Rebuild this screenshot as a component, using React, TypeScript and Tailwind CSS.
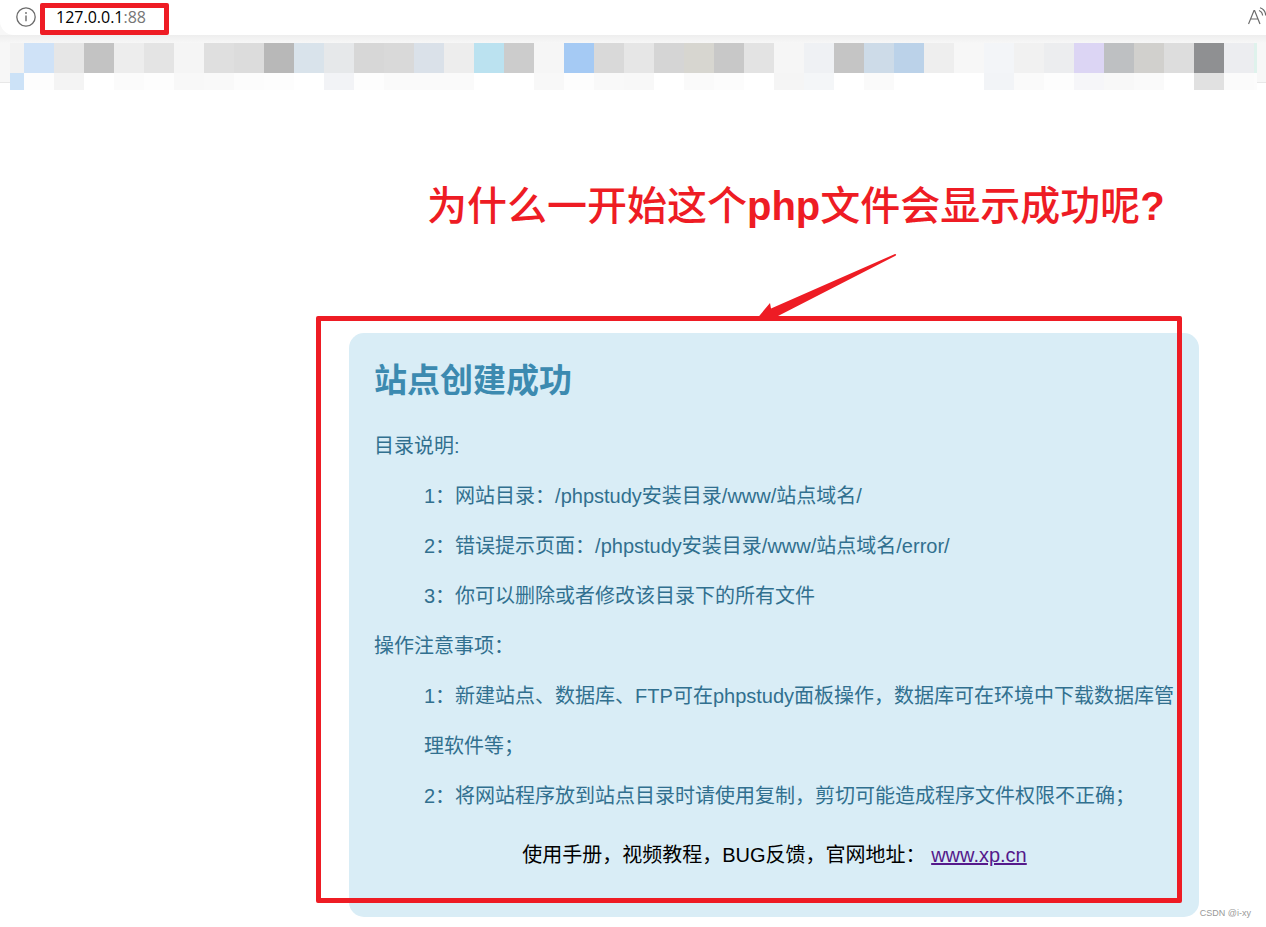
import { clsx } from "clsx";

const topCells = [
  "bg-[#cfe2f7]", "bg-[#e6e6e6]", "bg-[#c3c3c3]", "bg-[#ededed]", "bg-[#e4e4e4]", "bg-[#f5f5f5]",
  "bg-[#dfdfdf]", "bg-[#dcdcdc]", "bg-[#b8b8b8]", "bg-[#d9e3eb]", "bg-[#e6e8ea]", "bg-[#d7d7d7]",
  "bg-[#d9d9d9]", "bg-[#dae1e9]", "bg-[#ededed]", "bg-[#bbe2f0]", "bg-[#cccccc]", "bg-[#f6f6f6]",
  "bg-[#a5caf4]", "bg-[#d9d9d9]", "bg-[#e6e6e6]", "bg-[#d5d5d5]", "bg-[#d7d6d0]", "bg-[#c8c8c8]",
  "bg-[#e3e3e3]", "bg-[#f6f6f6]", "bg-[#eff1f4]", "bg-[#c5c5c5]", "bg-[#cddbe8]", "bg-[#bbd2e9]",
  "bg-[#eeeeee]", "bg-[#f7f7f7]", "bg-[#f3f5f8]", "bg-[#f1f1f1]", "bg-[#ecedef]", "bg-[#dcd5f4]",
  "bg-[#bec0c2]", "bg-[#d1d0cd]", "bg-[#dddddd]", "bg-[#8f9092]", "bg-[#ecedf0]",
];

const bottomCells = [
  "bg-[#fdfdfd]", "bg-[#f4f4f4]", "bg-white", "bg-[#fbfbfb]", "bg-[#fdfdfd]", "bg-[#f8f8f8]",
  "bg-[#f9f9f9]", "bg-[#fcfcfc]", "bg-[#fdfdfd]", "bg-white", "bg-[#f2f3f6]", "bg-[#fdfdfd]",
  "bg-[#fafafa]", "bg-[#fafafa]", "bg-[#fafafa]", "bg-white", "bg-white", "bg-[#f8f8f8]",
  "bg-[#fdfdfd]", "bg-[#f9f9f9]", "bg-[#f8f8f8]", "bg-white", "bg-[#fafafa]", "bg-[#fcfcfc]",
  "bg-white", "bg-[#f5f5f5]", "bg-[#f4f6f8]", "bg-white", "bg-[#fafafa]", "bg-white",
  "bg-white", "bg-white", "bg-[#f2f4f7]", "bg-[#fafafa]", "bg-[#fdfdfd]", "bg-[#f6f6f9]",
  "bg-[#f8f8f8]", "bg-[#fafafa]", "bg-white", "bg-[#e1e1e1]", "bg-[#fbfbfb]",
];

const directoryNotes = [
  "1：网站目录：/phpstudy安装目录/www/站点域名/",
  "2：错误提示页面：/phpstudy安装目录/www/站点域名/error/",
  "3：你可以删除或者修改该目录下的所有文件",
];

const operationNotes = [
  "1：新建站点、数据库、FTP可在phpstudy面板操作，数据库可在环境中下载数据库管理软件等；",
  "2：将网站程序放到站点目录时请使用复制，剪切可能造成程序文件权限不正确；",
];

function MosaicRow({ cells, first, last, height }: { cells: string[]; first: string; last: string; height: string }) {
  return (
    <div className={clsx("flex", height)}>
      <div className={clsx("w-[14px] shrink-0", first)} />
      {cells.map((color, i) => (
        <div key={i} className={clsx("flex-1", color)} />
      ))}
      <div className={clsx("w-[3px] shrink-0", last)} />
    </div>
  );
}

function AddressBar() {
  return (
    <div className="flex h-[35px] items-start justify-between rounded-bl-[14px] bg-white pl-4">
      <div className="flex gap-1">
        <button type="button" aria-label="站点信息" className="flex h-[34px] items-center">
          <svg className="size-5" viewBox="0 0 20 20" fill="none" stroke="#6b6b6b">
            <circle cx="10" cy="10" r="9.2" strokeWidth="1.3" />
            <path d="M10 8.600v5.600" strokeWidth="1.4" />
            <circle cx="10" cy="6" r="0.9" fill="#6b6b6b" stroke="none" />
          </svg>
        </button>
        <div className="mt-[3px] flex h-8 w-[129px] items-center rounded-xs border-[5px] border-[#ee1c24] pb-1 pl-[11px] font-['Open_Sans',sans-serif] text-base leading-5 text-black">
          127.0.0.1<span className="text-[#767676]">:88</span>
        </div>
      </div>
      <button type="button" aria-label="朗读此页内容" className="flex h-[34px] items-center">
        <svg className="h-5 w-[18px]" viewBox="0 0 18 20" fill="none" stroke="#6b6b6b" strokeWidth="1.2">
          <path d="M0.500 17 6 3.500h.6L12 17M2.500 12h7.500" />
          <path d="M11 3.500c2 .8 3.400 2.500 3.600 5M12 0.800c3.500 1.200 5.500 3.900 5.700 7.700" />
        </svg>
      </button>
    </div>
  );
}

export default function App() {
  return (
    <div className="min-h-screen overflow-x-hidden bg-white pb-[10px] font-['Liberation_Sans','Noto_Sans_CJK_SC',sans-serif]">
      <header className="h-[83px] border-b border-[#e8e8e8] bg-[#f7f7f7]">
        <AddressBar />
        <div className="h-2 bg-linear-to-b from-[#eeeeee] to-[#f7f7f7]" />
        <div className="ml-[10px] mr-[9px]">
          <MosaicRow cells={topCells} first="bg-[#f2f2f2]" last="bg-[#dff2ec]" height="h-[30px]" />
          <MosaicRow cells={bottomCells} first="bg-[#cce2f7]" last="bg-[#fcfcfc]" height="h-[17px]" />
        </div>
      </header>

      <main className="pl-[349px] pr-[67px] pt-[93px]">
        <p className="pl-[78px] text-[40px] leading-[60px] font-medium whitespace-nowrap text-[#ee1c24]">
          为什么一开始这个<b className="font-bold">php</b>文件会显示成功呢<b className="font-bold">?</b>
        </p>

        <section className="relative mt-[97px] rounded-[15px] bg-[#d9edf6] pt-[23px] pr-6 pb-[37px] pl-[25px] text-xl leading-[50px] text-[#31708f]">
          <h1 className="mb-[15px] text-[33px] leading-[50px] font-bold text-[#3c8ab0]">站点创建成功</h1>
          <p>目录说明:</p>
          <ul className="pl-[50px]">
            {directoryNotes.map((note) => (
              <li key={note}>{note}</li>
            ))}
          </ul>
          <p>操作注意事项：</p>
          <ul className="pl-[50px]">
            {operationNotes.map((note) => (
              <li key={note}>{note}</li>
            ))}
          </ul>
          <p className="mt-[9px] text-center text-black">
            使用手册，视频教程，BUG反馈，官网地址：{" "}
            <a href="#" className="text-[#551a8b] underline">
              www.xp.cn
            </a>
          </p>

          <div className="pointer-events-none absolute -top-[17px] right-[17px] bottom-[14px] -left-[33px] rounded-xs border-[5px] border-[#ee1c24]" />
          <svg
            className="pointer-events-none absolute -top-[80px] left-[406px] h-[68px] w-[142px]"
            viewBox="0 0 142 68"
            fill="#ee1c24"
          >
            <path d="M140 1 Q142 1.500 140.500 2.800 L23 63 L25 68 L0 68 L15 50 L16 55.500 Z" />
          </svg>
        </section>

        <p className="-mr-[67px] -mt-[12px] pr-[15px] text-right text-[9px] leading-4 text-[#999999]">CSDN @i-xy</p>
      </main>
    </div>
  );
}
